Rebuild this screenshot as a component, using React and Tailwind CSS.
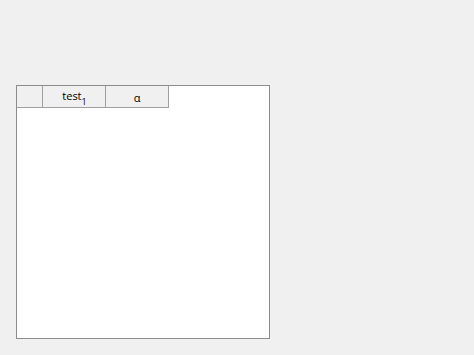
export default function App() {
  return (
    <div className="w-[474px] h-[355px] bg-[#f0f0f0] pt-[85px] pl-[16px]">
      <div className="w-[254px] h-[254px] border border-[#8c8c8c] bg-white" style={{ fontFamily: '"Open Sans", "DejaVu Sans", sans-serif' }}>
        <div className="flex">
          <div className="w-[26px] h-[22px] bg-[#f0f0f0] border-r border-b border-[#a0a0a0]"></div>
          <div className="w-[63px] h-[22px] bg-[#f0f0f0] border-r border-b border-[#a0a0a0] flex items-center justify-center text-[11px] text-black leading-none">
            <span className="-mt-[3px] pl-[1px]">test<span className="text-[9px] relative top-[5px]">1</span></span>
          </div>
          <div className="w-[63px] h-[22px] bg-[#f0f0f0] border-r border-b border-[#a0a0a0] flex items-center justify-center text-[11px] text-black leading-none">
            <span className="mt-[1px]">α</span>
          </div>
        </div>
      </div>
    </div>
  );
}
